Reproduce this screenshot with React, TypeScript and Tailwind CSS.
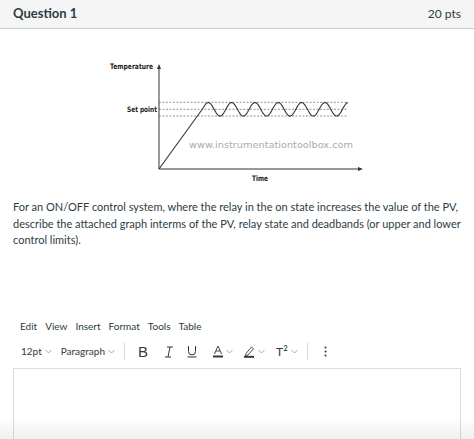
import React from 'react';

const wavePath = (() => {
  const pts: string[] = ['M54 114', 'L98 53.3'];
  for (let x = 98; x <= 243; x += 1) {
    const y = 54.3 - 6.8 * Math.cos((2 * Math.PI * (x - 103.3)) / 23.33);
    pts.push(`L${x} ${y.toFixed(2)}`);
  }
  return pts.join(' ');
})();

function Chart() {
  return (
    <svg width="260" height="130" viewBox="0 0 260 130" className="block">
      <g fill="#222" fontFamily="'DejaVu Sans', Verdana, sans-serif" fontWeight="bold" fontSize="7.5">
        <text x="5" y="13.5" textLength="43" lengthAdjust="spacingAndGlyphs">Temperature</text>
        <text x="22" y="56.5" textLength="30" lengthAdjust="spacingAndGlyphs">Set point</text>
        <text x="147" y="125.5" textLength="16" lengthAdjust="spacingAndGlyphs">Time</text>
      </g>
      <text
        x="84"
        y="93"
        fill="#aaaaaa"
        fontFamily="'DejaVu Sans', Verdana, sans-serif"
        fontSize="9.5"
        textLength="164"
        lengthAdjust="spacingAndGlyphs"
      >
        www.instrumentationtoolbox.com
      </text>
      <g stroke="#777" strokeWidth="0.8" strokeDasharray="2 1.5">
        <line x1="54" y1="47.3" x2="243" y2="47.3" />
        <line x1="54" y1="54.3" x2="243" y2="54.3" />
        <line x1="54" y1="61" x2="243" y2="61" />
      </g>
      <g stroke="#333" strokeWidth="1" fill="none">
        <line x1="54" y1="12" x2="54" y2="114" />
        <line x1="54" y1="114" x2="254" y2="114" />
      </g>
      <path d="M54 9 L52 14 L56 14 Z" fill="#333" />
      <path d="M258 114 L253 112 L253 116 Z" fill="#333" />
      <path d={wavePath} stroke="#333" strokeWidth="1.1" fill="none" strokeLinejoin="round" />
    </svg>
  );
}

function Chevron() {
  return (
    <svg width="7" height="5" viewBox="0 0 7 5" className="ml-[3px]">
      <path d="M0.5 1 L3.5 4 L6.5 1" stroke="#8b969e" strokeWidth="0.8" fill="none" />
    </svg>
  );
}

function Toolbar() {
  return (
    <div className="flex items-center h-[22px] pl-[21px] text-[10px] text-[#2d3b45]">
      <span>12pt</span>
      <Chevron />
      <span className="ml-[9px]">Paragraph</span>
      <Chevron />
      <div className="ml-[9px] w-px h-[17px] bg-[#d7dadd]" />
      <span className="ml-[13px] text-[15px] leading-none font-['Liberation_Sans',sans-serif]">B</span>
      <svg width="10" height="12" viewBox="0 0 10 12" className="ml-[16px]">
        <path d="M3 1 H9 M1 11 H7 M6 1 L4 11" stroke="#2d3b45" strokeWidth="1" fill="none" />
      </svg>
      <svg width="10" height="13" viewBox="0 0 10 13" className="ml-[13px]">
        <path d="M1.5 1 V6.5 A3.5 3.5 0 0 0 8.5 6.5 V1 M0.5 12 H9.5" stroke="#2d3b45" strokeWidth="1" fill="none" />
      </svg>
      <svg width="10" height="13" viewBox="0 0 10 13" className="ml-[16px]">
        <path d="M1.5 9 L5 1 L8.5 9 M2.8 6 H7.2" stroke="#2d3b45" strokeWidth="0.9" fill="none" />
        <rect x="0" y="10.5" width="10" height="2" fill="#2d3b45" />
      </svg>
      <Chevron />
      <svg width="11" height="13" viewBox="0 0 11 13" className="ml-[11px]">
        <path d="M2 8.5 L7.5 2 L9.5 3.8 L4 10 L1.5 10.5 Z" stroke="#2d3b45" strokeWidth="0.9" fill="none" />
        <rect x="0" y="10.8" width="10" height="2" fill="#2d3b45" />
      </svg>
      <Chevron />
      <span className="ml-[11px] flex items-start leading-none">
        <span className="text-[12px]">T</span>
        <span className="text-[7px] font-bold -mt-[1px] ml-[0.5px]">2</span>
      </span>
      <Chevron />
      <div className="ml-[9px] w-px h-[17px] bg-[#d7dadd]" />
      <svg width="3" height="11" viewBox="0 0 3 11" className="ml-[16px]">
        <circle cx="1.5" cy="1.5" r="1" fill="#2d3b45" />
        <circle cx="1.5" cy="5.5" r="1" fill="#2d3b45" />
        <circle cx="1.5" cy="9.5" r="1" fill="#2d3b45" />
      </svg>
    </div>
  );
}

export default function App() {
  return (
    <div className="w-[474px] h-[439px] bg-white overflow-hidden relative font-['Lato','Liberation_Sans',sans-serif] text-[#2d3b45]">
      <header className="h-[29px] bg-[#f5f5f5] border-b border-[#c7cdd1] flex items-center justify-between px-[13px]">
        <h2 className="text-[13px] font-bold">Question 1</h2>
        <span className="text-[12px]">20 pts</span>
      </header>

      <div className="pl-[105px] pt-[26px]">
        <Chart />
      </div>

      <p className="px-[13px] mt-[14px] text-[11px] leading-[16.5px]">
        For an ON/OFF control system, where the relay in the on state increases the value of the PV, describe the attached graph interms of the PV, relay state and deadbands (or upper and lower control limits).
      </p>

      <nav className="flex gap-[8px] pl-[20px] mt-[70px] text-[10px]">
        <span>Edit</span>
        <span>View</span>
        <span>Insert</span>
        <span>Format</span>
        <span>Tools</span>
        <span>Table</span>
      </nav>

      <div className="mt-[7px]">
        <Toolbar />
      </div>

      <div className="mx-[13px] mt-[5px] h-[120px] border border-[#dcdcdc] bg-white" />

      <div className="absolute left-0 right-0 bottom-0 h-[22px] pointer-events-none bg-gradient-to-b from-transparent to-black/[0.06]" />
    </div>
  );
}
